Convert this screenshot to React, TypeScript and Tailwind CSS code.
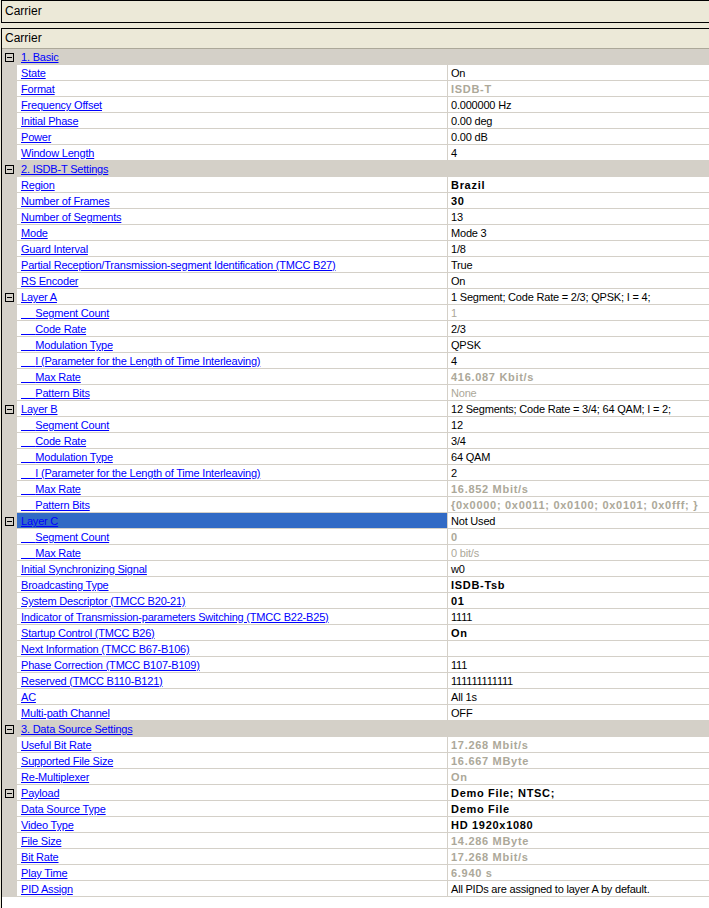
import { Fragment } from "react";

type Tone = "n" | "b" | "g" | "gb";

type Row =
    | { kind: "section"; label: string }
    | { kind: "item"; label: string; value: string; tone?: Tone; sub?: boolean; group?: boolean; selected?: boolean };

const rows: Row[] = [
    { kind: "section", label: "1. Basic" },
    { kind: "item", label: "State", value: "On" },
    { kind: "item", label: "Format", value: "ISDB-T", tone: "gb" },
    { kind: "item", label: "Frequency Offset", value: "0.000000 Hz" },
    { kind: "item", label: "Initial Phase", value: "0.00 deg" },
    { kind: "item", label: "Power", value: "0.00 dB" },
    { kind: "item", label: "Window Length", value: "4" },
    { kind: "section", label: "2. ISDB-T Settings" },
    { kind: "item", label: "Region", value: "Brazil", tone: "b" },
    { kind: "item", label: "Number of Frames", value: "30", tone: "b" },
    { kind: "item", label: "Number of Segments", value: "13" },
    { kind: "item", label: "Mode", value: "Mode 3" },
    { kind: "item", label: "Guard Interval", value: "1/8" },
    { kind: "item", label: "Partial Reception/Transmission-segment Identification (TMCC B27)", value: "True" },
    { kind: "item", label: "RS Encoder", value: "On" },
    { kind: "item", label: "Layer A", value: "1 Segment; Code Rate = 2/3; QPSK; I = 4;", group: true },
    { kind: "item", label: "Segment Count", value: "1", tone: "g", sub: true },
    { kind: "item", label: "Code Rate", value: "2/3", sub: true },
    { kind: "item", label: "Modulation Type", value: "QPSK", sub: true },
    { kind: "item", label: "I (Parameter for the Length of Time Interleaving)", value: "4", sub: true },
    { kind: "item", label: "Max Rate", value: "416.087 Kbit/s", tone: "gb", sub: true },
    { kind: "item", label: "Pattern Bits", value: "None", tone: "g", sub: true },
    { kind: "item", label: "Layer B", value: "12 Segments; Code Rate = 3/4; 64 QAM; I = 2;", group: true },
    { kind: "item", label: "Segment Count", value: "12", sub: true },
    { kind: "item", label: "Code Rate", value: "3/4", sub: true },
    { kind: "item", label: "Modulation Type", value: "64 QAM", sub: true },
    { kind: "item", label: "I (Parameter for the Length of Time Interleaving)", value: "2", sub: true },
    { kind: "item", label: "Max Rate", value: "16.852 Mbit/s", tone: "gb", sub: true },
    { kind: "item", label: "Pattern Bits", value: "{0x0000; 0x0011; 0x0100; 0x0101; 0x0fff; }", tone: "gb", sub: true },
    { kind: "item", label: "Layer C", value: "Not Used", group: true, selected: true },
    { kind: "item", label: "Segment Count", value: "0", tone: "gb", sub: true },
    { kind: "item", label: "Max Rate", value: "0 bit/s", tone: "g", sub: true },
    { kind: "item", label: "Initial Synchronizing Signal", value: "w0" },
    { kind: "item", label: "Broadcasting Type", value: "ISDB-Tsb", tone: "b" },
    { kind: "item", label: "System Descriptor (TMCC B20-21)", value: "01", tone: "b" },
    { kind: "item", label: "Indicator of Transmission-parameters Switching (TMCC B22-B25)", value: "1111" },
    { kind: "item", label: "Startup Control (TMCC B26)", value: "On", tone: "b" },
    { kind: "item", label: "Next Information (TMCC B67-B106)", value: "" },
    { kind: "item", label: "Phase Correction (TMCC B107-B109)", value: "111" },
    { kind: "item", label: "Reserved (TMCC B110-B121)", value: "111111111111" },
    { kind: "item", label: "AC", value: "All 1s" },
    { kind: "item", label: "Multi-path Channel", value: "OFF" },
    { kind: "section", label: "3. Data Source Settings" },
    { kind: "item", label: "Useful Bit Rate", value: "17.268 Mbit/s", tone: "gb" },
    { kind: "item", label: "Supported File Size", value: "16.667 MByte", tone: "gb" },
    { kind: "item", label: "Re-Multiplexer", value: "On", tone: "gb" },
    { kind: "item", label: "Payload", value: "Demo File; NTSC;", tone: "b", group: true },
    { kind: "item", label: "Data Source Type", value: "Demo File", tone: "b" },
    { kind: "item", label: "Video Type", value: "HD 1920x1080", tone: "b" },
    { kind: "item", label: "File Size", value: "14.286 MByte", tone: "gb" },
    { kind: "item", label: "Bit Rate", value: "17.268 Mbit/s", tone: "gb" },
    { kind: "item", label: "Play Time", value: "6.940 s", tone: "gb" },
    { kind: "item", label: "PID Assign", value: "All PIDs are assigned to layer A by default." },
];

// disabled text in the XP grid is that warm gray
const toneClass: Record<Tone, string> = {
    n: "text-black tracking-[-0.2px]",
    b: "text-black font-bold tracking-[0.7px]",
    g: "text-[#ACA899] tracking-[-0.2px]",
    gb: "text-[#ACA899] font-bold tracking-[0.7px]",
};

const Minus = () => (
    <div className="mt-1 ml-[3px] w-[9px] h-[9px] border border-black flex items-center justify-center">
        <div className="w-[5px] h-px bg-black" />
    </div>
);

const Label = ({ text, sub }: { text: string; sub?: boolean }) => (
    <span className="text-[#0000FF] underline underline-offset-1 whitespace-pre tracking-[-0.2px]">
        {sub ? "\u00a0\u00a0\u00a0\u00a0\u00a0" : ""}
        {text}
    </span>
);

const App = () => {
    return (
        <div
            className="w-[709px] h-[908px] bg-[#ECE9D8] pl-px flex flex-col overflow-hidden text-[11px] leading-[15px]"
            style={{ fontFamily: '"Liberation Sans", Arial, sans-serif' }}
        >
            <div className="h-[23px] border-l border-t border-b border-black pl-[3px] flex items-center text-black text-[12px]">
                Carrier
            </div>
            <div className="mt-[5px] flex-1 border-l border-t border-black flex flex-col bg-white">
                <div className="h-[20px] bg-[#ECE9D8] border-b border-[#ACA899] pl-[3px] flex items-center text-black text-[12px]">
                    Carrier
                </div>
                {rows.map((row, i) => {
                    if (row.kind === "section") {
                        return (
                            <div key={i} className="h-4 bg-[#D4D0C8] flex">
                                <div className="w-[15px] shrink-0">
                                    <Minus />
                                </div>
                                <div className="pl-1 pt-px">
                                    <Label text={row.label} />
                                </div>
                            </div>
                        );
                    }
                    return (
                        <div key={i} className="h-4 flex">
                            <div className="w-[15px] shrink-0 bg-[#D4D0C8]">
                                {row.group && <Minus />}
                            </div>
                            <div className="flex-1 flex border-b border-[#D4D0C8]">
                                <div
                                    className={`w-[430px] shrink-0 pl-1 pt-px overflow-hidden ${row.selected ? "bg-[#316AC5]" : ""}`}
                                >
                                    <Label text={row.label} sub={row.sub} />
                                </div>
                                <div className="w-px bg-[#D4D0C8]" />
                                <div className={`pl-[3px] pt-px whitespace-nowrap ${toneClass[row.tone ?? "n"]}`}>
                                    {row.value}
                                </div>
                            </div>
                        </div>
                    );
                })}
            </div>
        </div>
    );
};

export default App;
